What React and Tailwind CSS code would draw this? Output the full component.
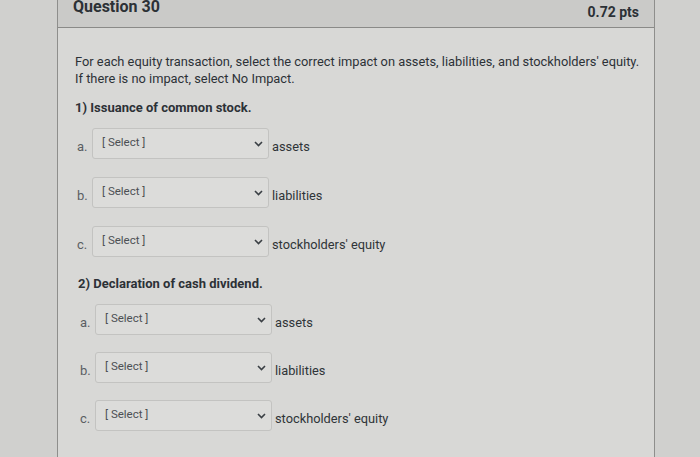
const sections = [
  { title: '1) Issuance of common stock.', rows: [['a.', 'assets'], ['b.', 'liabilities'], ['c.', 'stockholders\' equity']] },
  { title: '2) Declaration of cash dividend.', rows: [['a.', 'assets'], ['b.', 'liabilities'], ['c.', 'stockholders\' equity']] },
];

function Chevron() {
  return (
    <svg width="9" height="6" viewBox="0 0 9 6" className="shrink-0">
      <polyline points="1,1 4.5,4.5 8,1" fill="none" stroke="#3a3f44" strokeWidth="1.6" />
    </svg>
  );
}

function SelectRow({ letter, label }) {
  return (
    <div className="flex items-center">
      <span className="w-[15px] pt-[6px] text-[13px] text-[#5a5e62]">{letter}</span>
      <div className="flex h-[31px] w-[177px] items-center justify-between rounded-[3px] border border-[#c3c3c1] bg-[#dcdcda] pl-[9px] pr-[5px]">
        <span className="-mt-[2px] text-[11.5px] text-[#4c5054]">[ Select ]</span>
        <Chevron />
      </div>
      <span className="ml-[3px] pt-[6px] text-[12.8px] text-[#2f3438]">{label}</span>
    </div>
  );
}

export default function App() {
  return (
    <div className="h-[457px] w-[700px] overflow-hidden bg-[#d0d0ce]" style={{ fontFamily: 'Roboto, "Liberation Sans", sans-serif' }}>
      <div className="ml-[57px] h-full w-[598px] border-x border-[#8e8e8c] bg-[#d8d8d6]">
        <div className="flex h-[28px] items-start justify-between border-b border-[#8a8a88] bg-[#cacac8] pl-[15px] pr-[15px]">
          <span className="-mt-[5px] text-[16px] font-bold text-[#2c3136]">Question 30</span>
          <span className="mt-[2px] text-[14px] font-bold text-[#2c3136]">0.72 pts</span>
        </div>
        <div className="pl-[17px] pt-[25px]">
          <p className="whitespace-nowrap text-[12.85px] leading-[17px] text-[#2c3136]">
            For each equity transaction, select the correct impact on assets, liabilities, and stockholders' equity.
            <br />
            If there is no impact, select No Impact.
          </p>
          {sections.map((s, i) => (
            <div key={i} className={i === 0 ? 'mt-[12px]' : 'mt-[18px] pl-[3px]'}>
              <h3 className="text-[13px] font-bold leading-[17px] text-[#2c3136]">{s.title}</h3>
              <div className={`flex flex-col ${i === 0 ? 'mt-[12px] gap-[18px]' : 'mt-[12px] gap-[17px]'} pl-[2px]`}>
                {s.rows.map(([letter, label]) => (
                  <SelectRow key={letter} letter={letter} label={label} />
                ))}
              </div>
            </div>
          ))}
        </div>
      </div>
    </div>
  );
}
